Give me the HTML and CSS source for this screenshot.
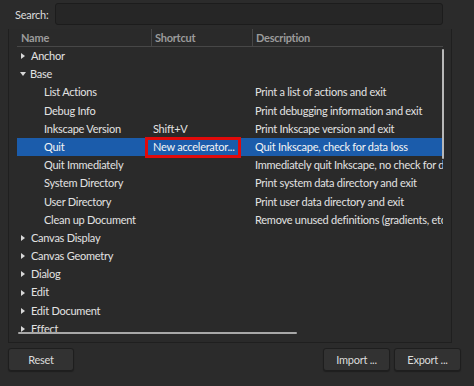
FILE: index.html
```html
<!DOCTYPE html>
<html>
<head>
<meta charset="utf-8">
<link rel="stylesheet" href="styles.css">
</head>
<body>
<div class="win">
  <div class="search">
    <span class="search-label">Search:</span>
    <div class="search-box"></div>
  </div>
  <div class="panel">
    <div class="head">
      <div class="col c-name">Name</div>
      <div class="col c-short sep">Shortcut</div>
      <div class="col c-desc sep">Description</div>
    </div>
    <div class="list">
      <div class="row"><div class="c-name lvl0"><span class="tri right"></span>Anchor</div></div>
      <div class="row"><div class="c-name lvl0"><span class="tri down"></span>Base</div></div>
      <div class="row"><div class="c-name lvl1">List Actions</div><div class="c-short"></div><div class="c-desc">Print a list of actions and exit</div></div>
      <div class="row"><div class="c-name lvl1">Debug Info</div><div class="c-short"></div><div class="c-desc">Print debugging information and exit</div></div>
      <div class="row"><div class="c-name lvl1">Inkscape Version</div><div class="c-short">Shift+V</div><div class="c-desc">Print Inkscape version and exit</div></div>
      <div class="row sel"><div class="c-name lvl1">Quit</div><div class="c-short"><span class="accel">New accelerator...</span></div><div class="c-desc">Quit Inkscape, check for data loss</div></div>
      <div class="row"><div class="c-name lvl1">Quit Immediately</div><div class="c-short"></div><div class="c-desc">Immediately quit Inkscape, no check for data loss</div></div>
      <div class="row"><div class="c-name lvl1">System Directory</div><div class="c-short"></div><div class="c-desc">Print system data directory and exit</div></div>
      <div class="row"><div class="c-name lvl1">User Directory</div><div class="c-short"></div><div class="c-desc">Print user data directory and exit</div></div>
      <div class="row"><div class="c-name lvl1">Clean up Document</div><div class="c-short"></div><div class="c-desc">Remove unused definitions (gradients, etc.)</div></div>
      <div class="row"><div class="c-name lvl0"><span class="tri right"></span>Canvas Display</div></div>
      <div class="row"><div class="c-name lvl0"><span class="tri right"></span>Canvas Geometry</div></div>
      <div class="row"><div class="c-name lvl0"><span class="tri right"></span>Dialog</div></div>
      <div class="row"><div class="c-name lvl0"><span class="tri right"></span>Edit</div></div>
      <div class="row"><div class="c-name lvl0"><span class="tri right"></span>Edit Document</div></div>
      <div class="row"><div class="c-name lvl0"><span class="tri right"></span>Effect</div></div>
      <div class="row"><div class="c-name lvl0"><span class="tri right"></span>Extensions</div></div>
    </div>
    <div class="vscroll"></div>
    <div class="hscroll"></div>
  </div>
  <div class="footer">
    <button class="btn btn-reset">Reset</button>
    <div class="spacer"></div>
    <button class="btn">Import ...</button>
    <button class="btn">Export ...</button>
  </div>
</div>
</body>
</html>
```
FILE: styles.css
```css
html, body {
  margin: 0;
  padding: 0;
  background: #2b2b2b;
  width: 474px;
  height: 386px;
  overflow: hidden;
}
body {
  font-family: Lato, "Open Sans", sans-serif;
  font-size: 11px;
  letter-spacing: -0.25px;
  color: #e2e2e2;
}
.win {
  display: flex;
  flex-direction: column;
}
.search {
  display: flex;
  align-items: center;
  padding: 3px 31px 0 15px;
  height: 22px;
}
.search-label {
  width: 40px;
  color: #dcdcdc;
}
.search-box {
  flex: 1;
  height: 20px;
  background: #262626;
  border: 1px solid #1c1c1c;
  border-radius: 3px;
}
.panel {
  position: relative;
  margin: 4px 22px 0 8px;
  height: 313px;
  border: 1px solid #1f1f1f;
  border-top: none;
  background: #2a2a2a;
  overflow: hidden;
}
.head {
  display: flex;
  height: 17px;
  margin: 0 8px 0 8px;
  border-bottom: 1px solid #474747;
  color: #9b9b9b;
  font-weight: 700;
  align-items: center;
}
.col { height: 17px; line-height: 17px; }
.sep { border-left: 1px solid #474747; }
.c-name { width: 134px; flex: none; padding-left: 4px; box-sizing: border-box; }
.head .c-short { width: 101px; padding-left: 3px; box-sizing: border-box; }
.head .c-desc { flex: 1; padding-left: 3px; }
.list {
  height: 287px;
  overflow: hidden;
  margin: 0 8px;
}
.row {
  display: flex;
  height: 18.2px;
  line-height: 18.2px;
  white-space: nowrap;
}
.row .c-short { width: 101px; flex: none; padding-left: 2px; box-sizing: border-box; }
.row .c-desc { flex: 1; padding-left: 3px; overflow: hidden; }
.lvl0 { padding-left: 4px; display: flex; align-items: center; }
.lvl1 { padding-left: 27px; }
.tri {
  display: inline-block;
  width: 0;
  height: 0;
}
.tri.right {
  border-top: 3.5px solid transparent;
  border-bottom: 3.5px solid transparent;
  border-left: 4px solid #d8d8d8;
  margin-left: 0;
  margin-right: 6px;
}
.tri.down {
  border-left: 3.5px solid transparent;
  border-right: 3.5px solid transparent;
  border-top: 4px solid #d8d8d8;
  margin-left: -1px;
  margin-right: 4px;
}
.row.sel {
  background: #1b5cab;
  color: #f4f4f4;
}
.accel {
  position: relative;
  display: inline-block;
}
.accel::after {
  content: "";
  position: absolute;
  left: -8px;
  right: -6px;
  top: -1px;
  bottom: -2px;
  border: 3px solid #e10a0a;
}
.vscroll {
  position: absolute;
  left: 433px;
  top: 20px;
  width: 2px;
  height: 110px;
  background: #b8b8b8;
  border-radius: 1px;
}
.hscroll {
  position: absolute;
  left: 9px;
  top: 303px;
  width: 279px;
  height: 2px;
  background: #a8a8a8;
  border-radius: 1px;
}
.footer {
  display: flex;
  padding: 5px 13px 0 8px;
  gap: 4px;
}
.spacer { flex: 1; }
.btn {
  font-family: inherit;
  font-size: 11px;
  letter-spacing: -0.25px;
  color: #dcdcdc;
  background: #323232;
  border: 1px solid #1e1e1e;
  border-radius: 3px;
  height: 23px;
  width: 67px;
  padding: 0;
  box-shadow: 0 1px 1px rgba(0,0,0,0.3);
}
.btn-reset { width: 66px; }
```
